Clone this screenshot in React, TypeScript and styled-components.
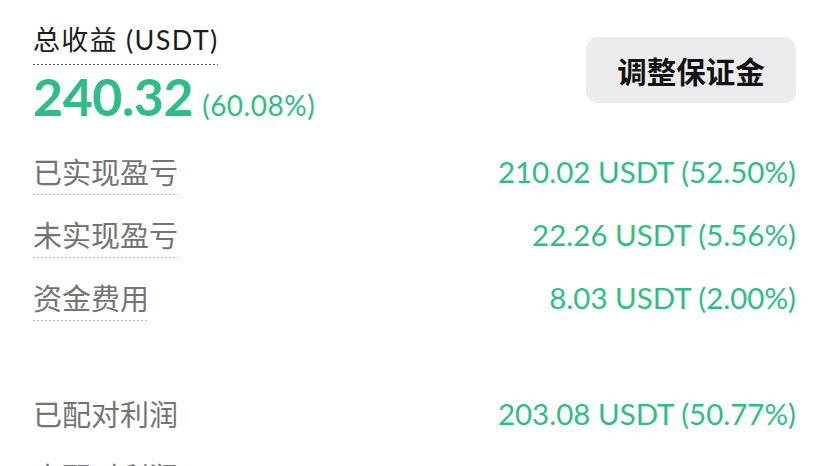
import React from 'react'
import styled, { createGlobalStyle } from 'styled-components'

const GlobalStyle = createGlobalStyle`
	html, body {
		margin: 0;
		padding: 0;
		background: #fff;
	}
	body {
		font-family: Lato, 'Noto Sans CJK SC', sans-serif;
		-webkit-font-smoothing: antialiased;
	}
`

const Page = styled.div`
	padding: 22px 32px 0 33px;
	height: 444px;
	overflow: hidden;
`

const Header = styled.div`
	display: flex;
	justify-content: space-between;
	align-items: flex-start;
	height: 121px;
`

const Summary = styled.div`
	display: flex;
	flex-direction: column;
	align-items: flex-start;
`

const dotted = (color: string) => `
	background-image: linear-gradient(to right, ${color} 50%, transparent 0);
	background-size: 4px 1px;
	background-repeat: repeat-x;
	background-position: left bottom;
`

const Title = styled.div`
	font-size: 27px;
	line-height: 36px;
	letter-spacing: 1.3px;
	color: #1c1c1c;
	padding-bottom: 7px;
	${dotted('#555')}
`

const Total = styled.div`
	display: flex;
	align-items: baseline;
	gap: 9px;
	margin-top: 3px;
	color: #2ebd85;
`

const Amount = styled.span`
	font-size: 52px;
	line-height: 56px;
	font-weight: 700;
	letter-spacing: -0.5px;
`

const Rate = styled.span`
	font-size: 28px;
	letter-spacing: 0.5px;
`

const Button = styled.button`
	margin-top: 15px;
	width: 210px;
	height: 66px;
	border: none;
	border-radius: 12px;
	background: #ececec;
	color: #111;
	font-family: 'Noto Sans CJK SC', sans-serif;
	font-size: 29.5px;
	font-weight: 700;
	cursor: pointer;
`

const Group = styled.div<{ $gap?: number }>`
	margin-top: ${(p) => p.$gap ?? 0}px;
`

const Row = styled.div`
	display: flex;
	justify-content: space-between;
	align-items: flex-start;
	height: 52px;
	padding-top: 11px;
`

const Label = styled.span<{ $underline?: boolean }>`
	font-family: 'Noto Sans CJK SC', sans-serif;
	font-size: 29px;
	line-height: 34px;
	color: #747474;
	padding-bottom: 7px;
	${(p) => (p.$underline ? dotted('#b5b5b5') : '')}
`

const Value = styled.span`
	font-size: 29.5px;
	line-height: 34px;
	color: #2ebd85;
	position: relative;
	top: 1px;
`

const pnl = [
	{ label: '已实现盈亏', value: '210.02 USDT (52.50%)' },
	{ label: '未实现盈亏', value: '22.26 USDT (5.56%)' },
	{ label: '资金费用', value: '8.03 USDT (2.00%)' },
]

const grid = [
	{ label: '已配对利润', value: '203.08 USDT (50.77%)' },
	{ label: '未配对利润', value: '' },
]

const App = () => {
	return (
		<Page>
			<GlobalStyle />
			<Header>
				<Summary>
					<Title>总收益 (USDT)</Title>
					<Total>
						<Amount>240.32</Amount>
						<Rate>(60.08%)</Rate>
					</Total>
				</Summary>
				<Button>调整保证金</Button>
			</Header>
			<Group>
				{pnl.map((item) => (
					<Row key={item.label}>
						<Label $underline>{item.label}</Label>
						<Value>{item.value}</Value>
					</Row>
				))}
			</Group>
			<Group $gap={53}>
				{grid.map((item) => (
					<Row key={item.label}>
						<Label>{item.label}</Label>
						<Value>{item.value}</Value>
					</Row>
				))}
			</Group>
		</Page>
	)
}

export default App
